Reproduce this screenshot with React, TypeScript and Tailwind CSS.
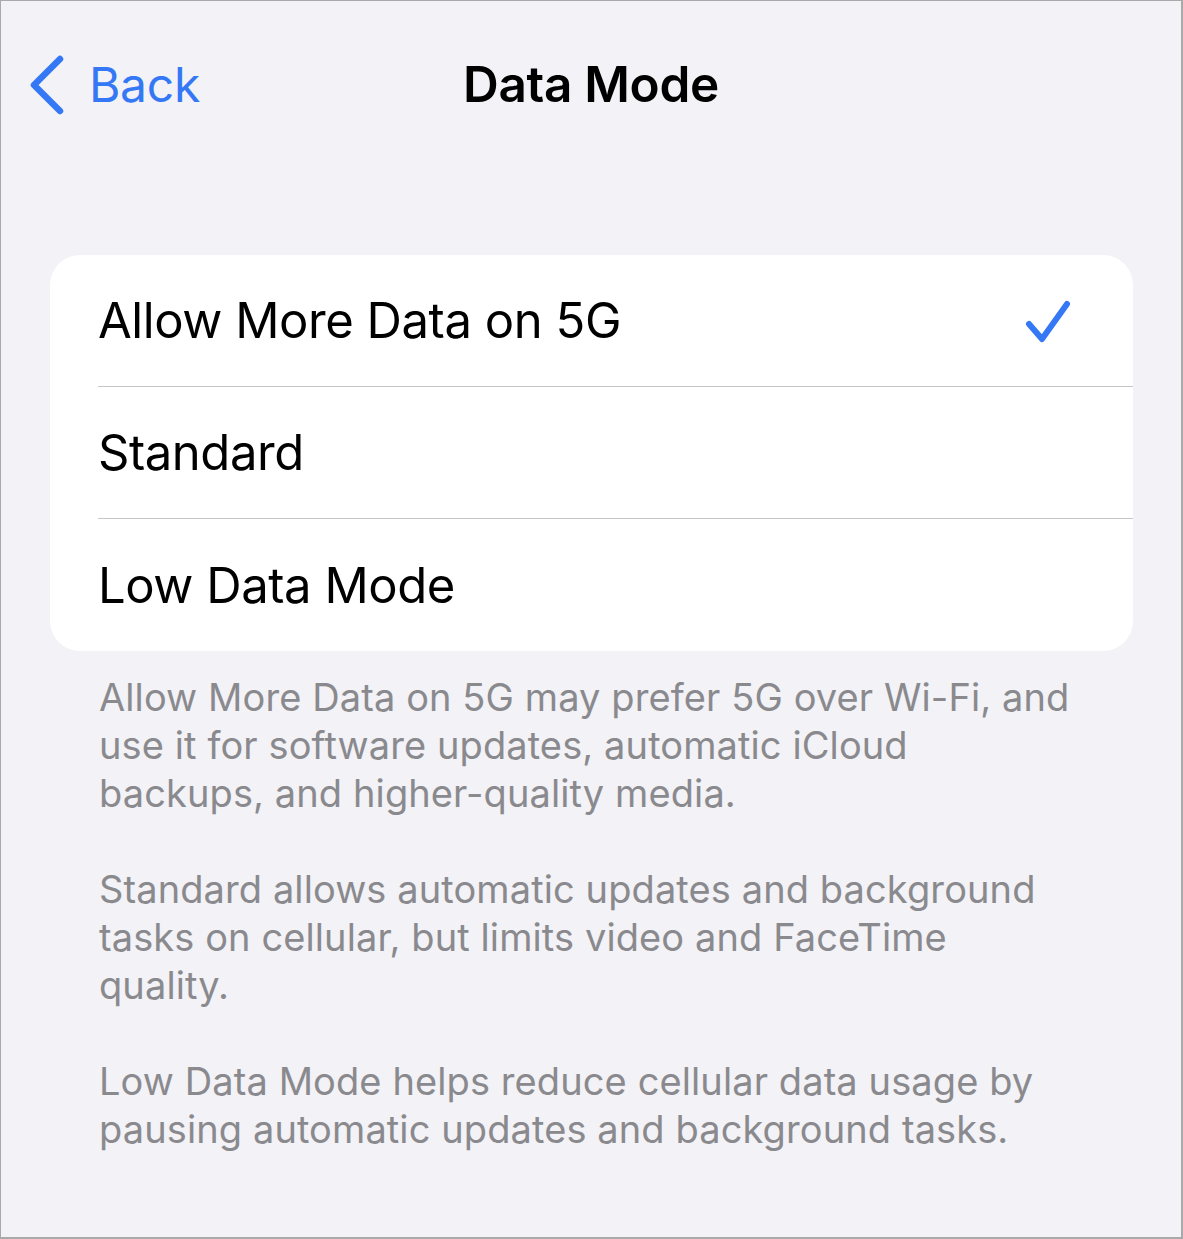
import React from "react";

const FONT = { fontFamily: "Inter, 'Noto Sans', sans-serif" };

function Chevron() {
  return (
    <svg width="40" height="60" viewBox="0 0 40 60" fill="none">
      <path
        d="M33 4 L7 30 L33 56"
        stroke="#3478f6"
        strokeWidth="6.5"
        strokeLinecap="round"
        strokeLinejoin="round"
      />
    </svg>
  );
}

function Check() {
  return (
    <svg width="50" height="50" viewBox="0 0 50 50" fill="none" className="mt-[4px]">
      <path
        d="M6 26 L19 41 L44 6"
        stroke="#3478f6"
        strokeWidth="6"
        strokeLinecap="round"
        strokeLinejoin="round"
      />
    </svg>
  );
}

const options = [
  { label: "Allow More Data on 5G", selected: true },
  { label: "Standard", selected: false },
  { label: "Low Data Mode", selected: false },
];

const notes: string[][] = [
  [
    "Allow More Data on 5G may prefer 5G over Wi-Fi, and",
    "use it for software updates, automatic iCloud",
    "backups, and higher-quality media.",
  ],
  [
    "Standard allows automatic updates and background",
    "tasks on cellular, but limits video and FaceTime",
    "quality.",
  ],
  [
    "Low Data Mode helps reduce cellular data usage by",
    "pausing automatic updates and background tasks.",
  ],
];

export default function App() {
  return (
    <div
      className="w-[1183px] h-[1239px] bg-[#f2f2f7] border border-r-2 border-b-2 border-[#a9a9a9] overflow-hidden"
      style={FONT}
    >
      <div className="grid grid-cols-[1fr_auto_1fr] items-center h-[168px]">
        <div className="flex items-center pl-[26px] gap-[22px] text-[#3478f6] text-[48px] tracking-[-0.3px]">
          <Chevron />
          <span className="leading-none">Back</span>
        </div>
        <div className="text-[49.5px] font-semibold text-black leading-none tracking-[-0.3px]">
          Data Mode
        </div>
        <div />
      </div>

      <div className="ml-[49px] w-[1083px] mt-[86px] bg-white rounded-[30px] overflow-hidden">
        {options.map((o, i) => (
          <div key={o.label} className="pl-[48px]">
            <div
              className={
                "flex items-center justify-between h-[132px] pr-[60px] " +
                (i < options.length - 1 ? "border-b border-[#c6c6c8]" : "")
              }
            >
              <span className="text-[49px] text-black leading-none tracking-[-0.45px]">
                {o.label}
              </span>
              {o.selected && <Check />}
            </div>
          </div>
        ))}
      </div>

      <div className="pl-[98px] pt-[22px] flex flex-col gap-[48px]">
        {notes.map((lines, i) => (
          <p
            key={i}
            className="text-[38px] leading-[48px] text-[#8a8a8e] whitespace-nowrap tracking-[0.1px]"
          >
            {lines.map((l, j) => (
              <React.Fragment key={j}>
                {l}
                {j < lines.length - 1 && <br />}
              </React.Fragment>
            ))}
          </p>
        ))}
      </div>
    </div>
  );
}
